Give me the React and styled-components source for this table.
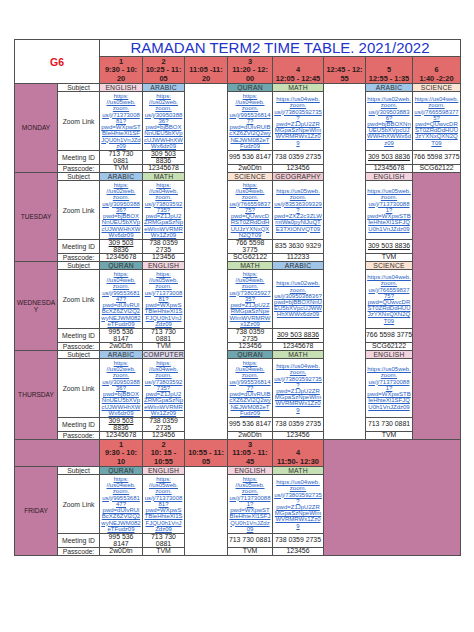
import React from 'react';
import styled, { createGlobalStyle } from 'styled-components';

const GlobalStyle = createGlobalStyle`
  html, body { margin: 0; padding: 0; background: #fff; }
  body { font-family: "Liberation Sans", Arial, sans-serif; color: #2b2b2b; }
`;

const LINK = {
  english: 'https://us05web.zoom.us/j/7137300881?pwd=WXpwSTBIeHhteXl1SFJQU0h1VnJZdz09',
  arabic: 'https://us02web.zoom.us/j/3095038836?pwd=bjBBOXNnUEU5bXVpcUJWWHhXWWx6dz09',
  quran: 'https://us04web.zoom.us/j/9955368147?pwd=dUIvRUlBcXZ6ZVl2Q2wyNEJWM082eTFudz09',
  math: 'https://us04web.zoom.us/j/73803592735?pwd=Z1JpU2ZRMGpaSzNpeWlmWVRMRWx1Zz09',
  science: 'https://us04web.zoom.us/j/76655983775?pwd=QUwvcDRST0ZRdDdHUUJzYXNxQXN2QT09',
  geography: 'https://us05web.zoom.us/j/83536309329?pwd=ZXZ2c3ZLWmtWa0pyNlJuQTE3TXlONVQT09',
};

const SESSIONS = {
  english: { name: 'ENGLISH', bg: '#f3d3de', link: LINK.english, id: '713 730 0881', pass: 'TVM' },
  arabic: { name: 'ARABIC', bg: '#9fc5e8', link: LINK.arabic, id: '309 503 8836', pass: '12345678', idLink: true },
  quran: { name: 'QURAN', bg: '#6ea5ae', link: LINK.quran, id: '995 536 8147', pass: '2w0Dtn' },
  math: { name: 'MATH', bg: '#c6e0b4', link: LINK.math, id: '738 0359 2735', pass: '123456' },
  science: { name: 'SCIENCE', bg: '#fce4d4', link: LINK.science, id: '766 5598 3775', pass: 'SCG62122' },
  geography: { name: 'GEOGRAPHY', bg: '#efc9d1', link: LINK.geography, id: '835 3630 9329', pass: '112233' },
  computer: { name: 'COMPUTER', bg: '#d9d5ea', link: LINK.math, id: '738 0359 2735', pass: '123456' },
};

const TOP_TIMES = [
  { col: 3, lines: ['1', '9:30 - 10:', '20'] },
  { col: 4, lines: ['2', '10:25 - 11:', '05'] },
  { col: 5, lines: ['11:05 -11:', '20'] },
  { col: 6, lines: ['3', '11:20 - 12:', '00'] },
  { col: 7, lines: ['4', '12:05 - 12:45'] },
  { col: 8, lines: ['12:45 - 12:', '55'] },
  { col: 9, lines: ['5', '12:55 - 1:35'] },
  { col: 10, lines: ['6', '1:40 -2:20'] },
];

const FRIDAY_TIMES = [
  { col: 3, lines: ['1', '9:30 - 10:', '10'] },
  { col: 4, lines: ['2', '10: 15 -', '10:55'] },
  { col: 5, lines: ['10:55 - 11:', '05'] },
  { col: 6, lines: ['3', '11:05 - 11:', '45'] },
  { col: 7, lines: ['4', '11:50- 12:30'] },
];

const WEEK = [
  { name: 'MONDAY', row: 3, slots: { 3: 'english', 4: 'arabic', 6: 'quran', 7: 'math', 9: 'arabic', 10: 'science' } },
  {
    name: 'TUESDAY', row: 7,
    slots: { 3: 'arabic', 4: 'math', 6: 'science', 7: 'geography', 9: { ...SESSIONS.english, id: '309 503 8836', idLink: true } },
  },
  { name: 'WEDNESDAY', row: 11, slots: { 3: 'quran', 4: 'english', 6: 'math', 7: 'arabic', 9: 'science' } },
  { name: 'THURSDAY', row: 15, slots: { 3: 'arabic', 4: 'computer', 6: 'quran', 7: 'math', 9: 'english' } },
  { name: 'FRIDAY', row: 20, slots: { 3: 'quran', 4: 'english', 6: 'english', 7: 'math' } },
];

const LABELS = ['Subject', 'Zoom Link', 'Meeting ID', 'Passcode:'];

// let long urls wrap after ":", "." and "?" the way the spreadsheet does
const wrapUrl = (url) => url.replace(/([:.?])/g, '$1\u200B');

const TimeHeader = ({ row, col, lines }) => (
  <TimeCell $row={row} $col={col}>
    {lines.map((l, i) => <span key={i}>{l}</span>)}
  </TimeCell>
);

const DayBlock = ({ day }) => {
  const r = day.row;
  return (
    <>
      <DayCell $row={`${r} / ${r + 4}`} $col="1">{day.name}</DayCell>
      {LABELS.map((label, i) => (
        <LabelCell key={label} $row={r + i} $col="2">{label}</LabelCell>
      ))}
      {Object.entries(day.slots).map(([col, slot]) => {
        const s = typeof slot === 'string' ? SESSIONS[slot] : slot;
        return (
          <React.Fragment key={col}>
            <SubjectCell $row={r} $col={col} $bg={s.bg}>{s.name}</SubjectCell>
            <LinkCell $row={r + 1} $col={col}>
              <ZoomLink href={s.link}>{wrapUrl(s.link)}</ZoomLink>
            </LinkCell>
            <ValueCell $row={r + 2} $col={col}>
              {s.idLink ? <Underlined>{s.id}</Underlined> : s.id}
            </ValueCell>
            <ValueCell $row={r + 3} $col={col}>{s.pass}</ValueCell>
          </React.Fragment>
        );
      })}
    </>
  );
};

const App = () => {
  return (
    <Page>
      <GlobalStyle />
      <Sheet>
        <GradeCell $row="1 / 3" $col="1 / 3">G6</GradeCell>
        <TitleCell $row="1" $col="3 / 11">RAMADAN TERM2 TIME TABLE. 2021/2022</TitleCell>
        {TOP_TIMES.map((t) => <TimeHeader key={t.col} row={2} col={t.col} lines={t.lines} />)}

        {WEEK.slice(0, 4).map((d) => <DayBlock key={d.name} day={d} />)}
        <Blank $row="3 / 19" $col="5" />
        <Blank $row="3 / 19" $col="8" />
        <Blank $row="7 / 19" $col="10" $bg="#c27ba0" />

        <Blank $row="19" $col="1 / 3" $bg="#c27ba0" />
        {FRIDAY_TIMES.map((t) => <TimeHeader key={t.col} row={19} col={t.col} lines={t.lines} />)}
        <Blank $row="19 / 24" $col="8 / 11" $bg="#c27ba0" />
        <DayBlock day={WEEK[4]} />
        <Blank $row="20 / 24" $col="5" />
      </Sheet>
    </Page>
  );
};

const Page = styled.div`
  padding: 39px 0 0 14px;
  min-height: 632px;
  box-sizing: border-box;
`;

const Sheet = styled.div`
  display: grid;
  grid-template-columns: 42px 41px 42px 41px 42px 44px 50px 41px 46px 47px;
  grid-template-rows: 16px 26px repeat(4, 7px 58px 13px 7px) 26px 7px 58px 13px 7px;
  gap: 1px;
  padding: 1px;
  width: max-content;
  background: #505050;
`;

const Cell = styled.div`
  grid-row: ${(p) => p.$row};
  grid-column: ${(p) => p.$col};
  background: ${(p) => p.$bg || '#fff'};
  display: flex;
  align-items: center;
  justify-content: center;
  text-align: center;
  overflow: hidden;
  min-width: 0;
`;

const Blank = styled(Cell)``;

const GradeCell = styled(Cell)`
  color: #e3121b;
  font-weight: bold;
  font-size: 10.5px;
`;

const TitleCell = styled(Cell)`
  color: #2233c8;
  font-size: 15px;
  line-height: 16px;
  white-space: nowrap;
`;

const TimeCell = styled(Cell)`
  background: #e26b6b;
  flex-direction: column;
  justify-content: flex-end;
  font-weight: bold;
  font-size: 7.4px;
  line-height: 8.4px;
  color: #2a1a1a;
  white-space: nowrap;
`;

const DayCell = styled(Cell)`
  background: #c27ba0;
  font-size: 6.6px;
  line-height: 7.5px;
  color: #2c1a25;
  overflow-wrap: anywhere;
  padding: 0 1px;
`;

const LabelCell = styled(Cell)`
  font-size: 6.8px;
  line-height: 7px;
  white-space: nowrap;
`;

const SubjectCell = styled(Cell)`
  font-size: 6.8px;
  line-height: 7px;
  letter-spacing: 0.2px;
  white-space: nowrap;
  color: #333;
`;

const LinkCell = styled(Cell)`
  padding: 0 1px;
`;

const ZoomLink = styled.a`
  display: block;
  color: #2a5fc4;
  font-size: 6px;
  line-height: 6.2px;
  overflow-wrap: anywhere;
  text-decoration: underline;
`;

const ValueCell = styled(Cell)`
  font-size: 6.9px;
  line-height: 6.6px;
  color: #222;
`;

const Underlined = styled.span`
  text-decoration: underline;
`;

export default App;
